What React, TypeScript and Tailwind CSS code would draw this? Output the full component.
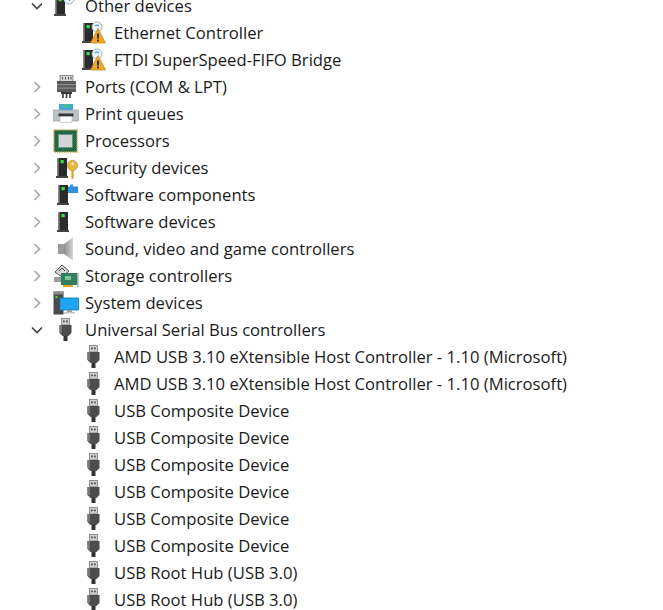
import React from 'react';

type IconName = 'other' | 'warn' | 'port' | 'print' | 'cpu' | 'security' | 'software' | 'softdev' | 'sound' | 'storage' | 'system' | 'usb';

const Tower = ({ x = 0 }: { x?: number }) => (
  <g transform={`translate(${x} 0)`}>
    <rect x="2" y="2" width="10" height="18" fill="#2a2a2a" />
    <rect x="2" y="2" width="1.6" height="18" fill="#8a8a8a" />
    <rect x="5.5" y="4" width="3.2" height="3.2" fill="#35e04a" />
    <rect x="1" y="20" width="12" height="2" fill="#444" />
  </g>
);

const Usb = () => (
  <g>
    <rect x="8.5" y="0.5" width="8" height="6.5" fill="#cfcfcf" stroke="#7a7a7a" strokeWidth="0.8" />
    <rect x="10" y="2.5" width="1.8" height="1.8" fill="#555" />
    <rect x="13" y="2.5" width="1.8" height="1.8" fill="#555" />
    <path d="M6.5 7 H18.5 V15 L15.5 18 H9.5 L6.5 15 Z" fill="#4d4d4d" />
    <rect x="6.5" y="7" width="2.5" height="8" fill="#777" />
    <rect x="10.5" y="18" width="4" height="5" fill="#333" />
  </g>
);

const icons: Record<IconName, React.ReactNode> = {
  other: (
    <>
      <Tower />
      <circle cx="16" cy="5" r="5" fill="#f4f8fb" stroke="#9fb2c2" strokeWidth="1" />
      <path d="M14 3.5 Q16 1.5 18 3.5 L16.6 5.5 V7" fill="none" stroke="#3f97d8" strokeWidth="1.2" />
    </>
  ),
  warn: (
    <>
      <Tower />
      <circle cx="16" cy="6" r="5" fill="#f4f8fb" stroke="#9fb2c2" strokeWidth="1" />
      <path d="M14 5 Q16 3 18 5" fill="none" stroke="#3f97d8" strokeWidth="1.2" />
      <path d="M17 7.5 L24.5 22 H9.5 Z" fill="#f0a92c" stroke="#c9831a" strokeWidth="0.8" />
      <rect x="16.1" y="12.5" width="1.8" height="5" fill="#222" />
      <rect x="16.1" y="18.6" width="1.8" height="1.8" fill="#222" />
    </>
  ),
  port: (
    <>
      <rect x="7" y="0.5" width="13" height="6" fill="#d5d5d5" stroke="#777" strokeWidth="0.8" />
      <path d="M9.5 2 V4.5 M12.5 2 V4.5 M15.5 2 V4.5 M18 2 V4.5" stroke="#555" strokeWidth="1" />
      <rect x="4" y="6" width="19" height="11" fill="#5a5a5a" />
      <rect x="4" y="9" width="19" height="1.2" fill="#8f8f8f" />
      <rect x="4" y="12.5" width="19" height="1.2" fill="#8f8f8f" />
      <rect x="8" y="17" width="11" height="2" fill="#3a3a3a" />
      <path d="M10 19 V23 M13.5 19 V23 M17 19 V23" stroke="#3a3a3a" strokeWidth="1.6" />
    </>
  ),
  print: (
    <>
      <rect x="6" y="2" width="14" height="6" fill="#3fa9dc" />
      <rect x="10.5" y="2.5" width="5" height="3" fill="#4fc26a" />
      <rect x="0.5" y="8" width="25" height="11" fill="#bcc3c7" stroke="#8e9499" strokeWidth="0.6" />
      <rect x="5.5" y="11.5" width="15" height="3" fill="#30363a" />
      <rect x="7" y="14.5" width="12" height="6" fill="#fafafa" stroke="#b5b5b5" strokeWidth="0.6" />
    </>
  ),
  cpu: (
    <>
      <rect x="1" y="1" width="23" height="22" fill="#1f6b49" stroke="#c2a24a" strokeWidth="1.6" strokeDasharray="1.4 0.8" />
      <rect x="5.5" y="5.5" width="14" height="13" fill="#d3d5d4" stroke="#6a8f7e" strokeWidth="0.8" />
    </>
  ),
  security: (
    <>
      <Tower x="2" />
      <circle cx="19.5" cy="9.5" r="5" fill="#e9b93e" stroke="#b98a20" strokeWidth="0.8" />
      <circle cx="19.5" cy="7.8" r="1.2" fill="#fff" />
      <path d="M18.3 14 H20.7 V22 L19.5 23.5 L18.3 22 Z" fill="#dba92f" />
    </>
  ),
  software: (
    <>
      <Tower x="3" />
      <path d="M17 1.5 H20 V3.5 H25 V10 H15 V3.5 H17 Z" fill="#2f8fe0" />
    </>
  ),
  softdev: <Tower x="3" />,
  sound: (
    <>
      <defs>
        <linearGradient id="cone" x1="0" x2="1" y1="0" y2="0">
          <stop offset="0" stopColor="#8d8d8d" />
          <stop offset="1" stopColor="#d6d6d6" />
        </linearGradient>
      </defs>
      <rect x="5" y="7" width="6" height="10" fill="#9a9a9a" />
      <path d="M11 7 L20 0.5 V23.5 L11 17 Z" fill="url(#cone)" />
    </>
  ),
  storage: (
    <>
      <path d="M2 8 L9 1 L16 7 L9 13 Z" fill="#d9d9d9" stroke="#555" strokeWidth="1" />
      <path d="M6 7 L9 4 L12 7" fill="none" stroke="#444" strokeWidth="1" />
      <rect x="1" y="13" width="7" height="5" fill="#9c9c9c" />
      <rect x="8" y="9" width="16" height="12" fill="#2f7f5f" />
      <rect x="12" y="12" width="6" height="4" fill="#7fc59a" />
      <rect x="10" y="21" width="10" height="2" fill="#e2a52c" />
      <rect x="24" y="9" width="1.5" height="14" fill="#9fb0a8" />
    </>
  ),
  system: (
    <>
      <rect x="0.5" y="0.5" width="10" height="23" fill="#4a4a4a" />
      <rect x="0.5" y="0.5" width="10" height="3" fill="#8d8d8d" />
      <rect x="2.5" y="5" width="2" height="2" fill="#35e04a" />
      <rect x="7" y="7" width="18.5" height="12" fill="#1fa6ee" stroke="#1377b5" strokeWidth="0.8" />
      <rect x="14" y="19" width="5" height="2" fill="#9aa3a8" />
      <rect x="11" y="21" width="11" height="1.6" fill="#c2c8cc" />
    </>
  ),
  usb: <Usb />,
};

const DeviceIcon = ({ name }: { name: IconName }) => (
  <svg width="26" height="24" viewBox="0 0 26 24" className="shrink-0">
    {icons[name]}
  </svg>
);

const Chevron = ({ open }: { open: boolean }) => (
  <svg width="12" height="12" viewBox="0 0 12 12" className="shrink-0">
    {open ? (
      <path d="M1 3.5 L6 8.5 L11 3.5" fill="none" stroke="#404040" strokeWidth="1.6" />
    ) : (
      <path d="M3.5 1 L8.5 6 L3.5 11" fill="none" stroke="#a6a6a6" strokeWidth="1.6" />
    )}
  </svg>
);

const Group = ({ icon, label, open = false }: { icon: IconName; label: string; open?: boolean }) => (
  <div className="h-[27px] flex items-center pl-[31px]">
    <Chevron open={open} />
    <div className="ml-[10px]">
      <DeviceIcon name={icon} />
    </div>
    <span className="ml-[6px] pt-[2px] whitespace-nowrap">{label}</span>
  </div>
);

const Child = ({ icon, label }: { icon: IconName; label: string }) => (
  <div className="h-[27px] flex items-center pl-[81px]">
    <DeviceIcon name={icon} />
    <span className="ml-[7px] pt-[2px] whitespace-nowrap">{label}</span>
  </div>
);

export default function App() {
  return (
    <div className="h-[610px] overflow-hidden bg-white text-[#1a1a1a] text-[16.65px] font-['Open_Sans',sans-serif]">
      <div className="-mt-2">
        <Group icon="other" label="Other devices" open />
        <Child icon="warn" label="Ethernet Controller" />
        <Child icon="warn" label="FTDI SuperSpeed-FIFO Bridge" />
        <Group icon="port" label="Ports (COM & LPT)" />
        <Group icon="print" label="Print queues" />
        <Group icon="cpu" label="Processors" />
        <Group icon="security" label="Security devices" />
        <Group icon="software" label="Software components" />
        <Group icon="softdev" label="Software devices" />
        <Group icon="sound" label="Sound, video and game controllers" />
        <Group icon="storage" label="Storage controllers" />
        <Group icon="system" label="System devices" />
        <Group icon="usb" label="Universal Serial Bus controllers" open />
        <Child icon="usb" label="AMD USB 3.10 eXtensible Host Controller - 1.10 (Microsoft)" />
        <Child icon="usb" label="AMD USB 3.10 eXtensible Host Controller - 1.10 (Microsoft)" />
        <Child icon="usb" label="USB Composite Device" />
        <Child icon="usb" label="USB Composite Device" />
        <Child icon="usb" label="USB Composite Device" />
        <Child icon="usb" label="USB Composite Device" />
        <Child icon="usb" label="USB Composite Device" />
        <Child icon="usb" label="USB Composite Device" />
        <Child icon="usb" label="USB Root Hub (USB 3.0)" />
        <Child icon="usb" label="USB Root Hub (USB 3.0)" />
      </div>
    </div>
  );
}
